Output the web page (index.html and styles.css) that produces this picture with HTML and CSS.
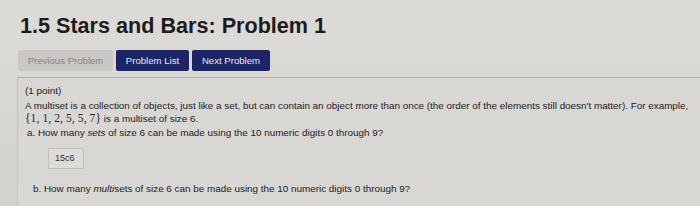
FILE: index.html
```html
<!DOCTYPE html>
<html>
<head>
<meta charset="utf-8">
<link rel="stylesheet" href="styles.css">
</head>
<body>
<h1 class="title">1.5 Stars and Bars: Problem 1</h1>
<div class="nav">
  <span class="btn btn-disabled">Previous Problem</span>
  <span class="btn btn-primary">Problem List</span>
  <span class="btn btn-primary">Next Problem</span>
</div>
<div class="problem">
  <div class="points">(1 point)</div>
  <div class="line">A multiset is a collection of objects, just like a set, but can contain an object more than once (the order of the elements still doesn't matter). For example,</div>
  <div class="line"><span class="math">{1, 1, 2, 5, 5, 7}</span> is a multiset of size 6.</div>
  <div class="line part-a">a. How many <em>sets</em> of size 6 can be made using the 10 numeric digits 0 through 9?</div>
  <div class="answer">15c6</div>
  <div class="line part-b">b. How many <em>multi</em>sets of size 6 can be made using the 10 numeric digits 0 through 9?</div>
</div>
</body>
</html>
```
FILE: styles.css
```css
html, body {
  margin: 0;
  padding: 0;
}
body {
  background: linear-gradient(180deg, #dddbd7 0%, #d8d6d2 60%, #d3d1cd 100%);
  font-family: "Liberation Sans", Arial, sans-serif;
  color: #222;
  width: 700px;
  height: 206px;
  overflow: hidden;
}
.title {
  margin: 0;
  padding: 13px 0 0 20px;
  font-size: 21.6px;
  line-height: 25px;
  font-weight: bold;
  color: #1c1c1c;
}
.nav {
  display: flex;
  gap: 3px;
  padding: 12px 0 0 18px;
}
.btn {
  display: flex;
  align-items: center;
  justify-content: center;
  height: 21px;
  font-size: 9.6px;
  border-radius: 2px;
  box-sizing: border-box;
  white-space: nowrap;
}
.btn-disabled {
  width: 95px;
  background: #cac8c5;
  color: #858482;
}
.btn-primary {
  background: #1c2468;
  color: #e8e9f2;
}
.nav .btn:nth-child(2) { width: 73px; }
.nav .btn:nth-child(3) { width: 78px; }
.problem {
  margin: 6px 0 0 17px;
  border-top: 1px solid #b6b4b0;
  border-left: 1px solid #c4c2be;
  padding: 6px 0 0 7px;
  font-size: 9.9px;
  line-height: 13.5px;
  background: #d9d7d3;
  height: 122px;
}
.points {
  margin-bottom: 1px;
}
.line {
  white-space: nowrap;
}
.math {
  font-family: "Liberation Serif", "Times New Roman", serif;
  font-size: 11.5px;
  letter-spacing: 0.1px;
}
.part-a {
  padding-left: 2px;
}
.answer {
  margin: 9px 0 0 23px;
  width: 36px;
  height: 21px;
  box-sizing: border-box;
  border: 1px solid #c2c0bc;
  background: #dedcd8;
  font-size: 9px;
  line-height: 19px;
  padding-left: 6px;
  color: #333;
}
.part-b {
  margin-top: 13px;
  padding-left: 8px;
}
```
